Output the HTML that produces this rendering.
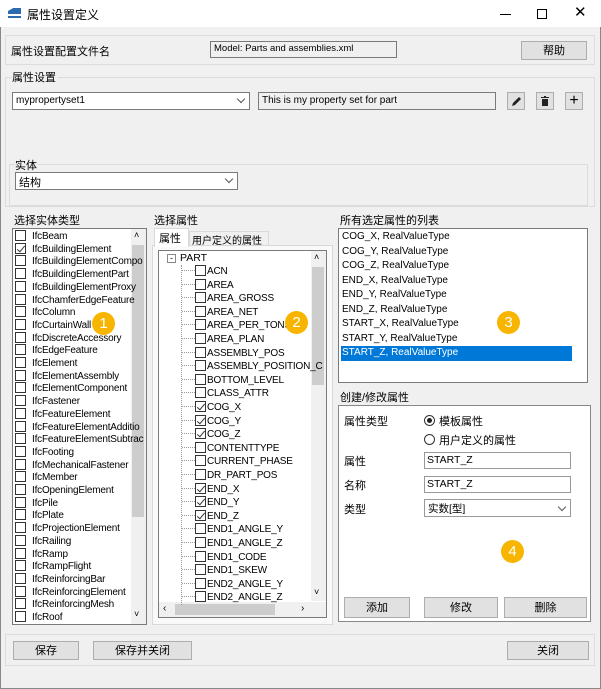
<!DOCTYPE html>
<html><head><meta charset="utf-8"><style>
*{box-sizing:border-box;margin:0;padding:0}
body{width:601px;height:689px;background:#f0f0f0;font-family:"Liberation Sans","Noto Sans CJK SC",sans-serif;font-size:11px;color:#000;position:relative;overflow:hidden}
.a{position:absolute}
.tb{left:0;top:0;width:601px;height:27px;background:#fff}
.frame{left:0;top:27px;width:601px;height:662px;border:1px solid #888;border-top:none}
.grp{position:absolute;border:1px solid #dcdcdc}
.in{position:absolute;background:#fff;border:1px solid #7a7a7a}
.ro{position:absolute;background:#f0f0f0;border:1px solid #7a7a7a}
.btn{position:absolute;background:#e1e1e1;border:1px solid #adadad;text-align:center;line-height:18px}
.lbl{position:absolute;white-space:nowrap}
.chev{position:absolute;right:5px;top:3px;width:6px;height:6px;border-right:1px solid #555;border-bottom:1px solid #555;transform:rotate(45deg)}
.row{position:absolute;left:0;white-space:nowrap;font-size:10px;letter-spacing:-0.2px;height:13px;line-height:13px}
.cb{display:inline-block;width:11px;height:11px;border:1px solid #333;background:#fff;vertical-align:-2px;margin-right:6px;position:relative}
.cb.c::after{content:"";position:absolute;left:3px;top:0px;width:3px;height:7px;border-right:1px solid #333;border-bottom:1px solid #333;transform:rotate(40deg)}
.circ{position:absolute;width:23px;height:23px;border-radius:50%;background:#f7b500;color:#fff;text-align:center;line-height:23px;font-size:15px}
.sb{position:absolute;background:#f0f0f0}
.th{position:absolute;background:#cdcdcd}
.ln{display:inline-block;width:13px;border-top:1px dotted #999;vertical-align:3px}
</style></head><body>
<div class="a tb"></div>
<div class="a" style="left:8px;top:8px;width:13px;height:11px">
<div class="a" style="left:0;top:0;width:13px;height:6px;background:#2b6cb0;clip-path:polygon(0 50%,40% 0,100% 0,100% 100%,0 100%)"></div>
<div class="a" style="left:0;top:8px;width:13px;height:2px;background:#2b6cb0"></div></div>
<div class="lbl" style="left:27px;top:6px;font-size:12px">属性设置定义</div>
<div class="a" style="left:500px;top:14px;width:11px;height:1px;background:#000"></div>
<div class="a" style="left:537px;top:9px;width:10px;height:10px;border:1px solid #000"></div>
<div class="lbl" style="left:574px;top:3px;font-size:15px">✕</div>
<div class="a frame"></div>

<div class="grp" style="left:5px;top:35px;width:590px;height:30px"></div>
<div class="lbl" style="left:11px;top:43px">属性设置配置文件名</div>
<div class="ro" style="left:210px;top:41px;width:187px;height:17px;font-size:9.5px;padding:1px 3px">Model: Parts and assemblies.xml</div>
<div class="btn" style="left:521px;top:41px;width:66px;height:19px">帮助</div>

<div class="grp" style="left:5px;top:77px;width:590px;height:130px"></div>
<div class="lbl" style="left:12px;top:69px;background:#f0f0f0;padding-right:2px">属性设置</div>
<div class="in" style="left:12px;top:92px;width:238px;height:18px;font-size:10px;padding:2px 3px">mypropertyset1<div class="chev"></div></div>
<div class="ro" style="left:258px;top:92px;width:238px;height:18px;font-size:10px;padding:2px 3px">This is my property set for part</div>
<div class="btn" style="left:507px;top:92px;width:18px;height:18px"><svg width="16" height="16" viewBox="0 0 16 16"><path d="M4 13l1-3 6-6 2 2-6 6z" fill="#222"/></svg></div>
<div class="btn" style="left:536px;top:92px;width:18px;height:18px"><svg width="16" height="16" viewBox="0 0 16 16"><path d="M4 4h8v1H4zM7 3h2v1H7zM5 6h6v7H5z" fill="#222"/></svg></div>
<div class="btn" style="left:565px;top:92px;width:18px;height:18px;font-size:16px;line-height:16px">+</div>

<div class="grp" style="left:9px;top:164px;width:579px;height:42px"></div>
<div class="lbl" style="left:15px;top:157px;background:#f0f0f0">实体</div>
<div class="in" style="left:15px;top:172px;width:223px;height:18px;padding:1px 3px">结构<div class="chev"></div></div>

<div class="lbl" style="left:14px;top:212px">选择实体类型</div>
<div class="in" style="left:12px;top:228px;width:135px;height:397px;overflow:hidden">
<div class="sb" style="left:118px;top:0;width:15px;height:395px"></div>
<div class="th" style="left:119px;top:16px;width:12px;height:272px"></div>
<div class="lbl" style="left:121px;top:1px;font-size:9px">˄</div>
<div class="lbl" style="left:121px;top:380px;font-size:9px">˅</div>
<div style="position:absolute;left:2px;top:1px">
<div class="row" style="top:0px"><span class="cb"></span>IfcBeam</div>
<div class="row" style="top:12.7px"><span class="cb c"></span>IfcBuildingElement</div>
<div class="row" style="top:25.4px"><span class="cb"></span>IfcBuildingElementCompo</div>
<div class="row" style="top:38.1px"><span class="cb"></span>IfcBuildingElementPart</div>
<div class="row" style="top:50.8px"><span class="cb"></span>IfcBuildingElementProxy</div>
<div class="row" style="top:63.5px"><span class="cb"></span>IfcChamferEdgeFeature</div>
<div class="row" style="top:76.2px"><span class="cb"></span>IfcColumn</div>
<div class="row" style="top:88.9px"><span class="cb"></span>IfcCurtainWall</div>
<div class="row" style="top:101.6px"><span class="cb"></span>IfcDiscreteAccessory</div>
<div class="row" style="top:114.3px"><span class="cb"></span>IfcEdgeFeature</div>
<div class="row" style="top:127px"><span class="cb"></span>IfcElement</div>
<div class="row" style="top:139.7px"><span class="cb"></span>IfcElementAssembly</div>
<div class="row" style="top:152.4px"><span class="cb"></span>IfcElementComponent</div>
<div class="row" style="top:165.1px"><span class="cb"></span>IfcFastener</div>
<div class="row" style="top:177.8px"><span class="cb"></span>IfcFeatureElement</div>
<div class="row" style="top:190.5px"><span class="cb"></span>IfcFeatureElementAdditio</div>
<div class="row" style="top:203.2px"><span class="cb"></span>IfcFeatureElementSubtrac</div>
<div class="row" style="top:215.9px"><span class="cb"></span>IfcFooting</div>
<div class="row" style="top:228.6px"><span class="cb"></span>IfcMechanicalFastener</div>
<div class="row" style="top:241.3px"><span class="cb"></span>IfcMember</div>
<div class="row" style="top:254px"><span class="cb"></span>IfcOpeningElement</div>
<div class="row" style="top:266.7px"><span class="cb"></span>IfcPile</div>
<div class="row" style="top:279.4px"><span class="cb"></span>IfcPlate</div>
<div class="row" style="top:292.1px"><span class="cb"></span>IfcProjectionElement</div>
<div class="row" style="top:304.8px"><span class="cb"></span>IfcRailing</div>
<div class="row" style="top:317.5px"><span class="cb"></span>IfcRamp</div>
<div class="row" style="top:330.2px"><span class="cb"></span>IfcRampFlight</div>
<div class="row" style="top:342.9px"><span class="cb"></span>IfcReinforcingBar</div>
<div class="row" style="top:355.6px"><span class="cb"></span>IfcReinforcingElement</div>
<div class="row" style="top:368.3px"><span class="cb"></span>IfcReinforcingMesh</div>
<div class="row" style="top:381px"><span class="cb"></span>IfcRoof</div>
</div></div>

<div class="lbl" style="left:154px;top:212px">选择属性</div>
<div class="a" style="left:152px;top:245px;width:181px;height:380px;border:1px solid #d9d9d9;background:#f9f9f9"></div>
<div class="a" style="left:154px;top:228px;width:35px;height:19px;background:#fff;border:1px solid #d9d9d9;border-bottom:none;padding:1px 4px">属性</div>
<div class="a" style="left:189px;top:231px;width:80px;height:15px;background:#f0f0f0;border:1px solid #d9d9d9;padding:0 2px;font-size:10px;white-space:nowrap">用户定义的属性</div>
<div class="in" style="left:158px;top:250px;width:169px;height:368px;overflow:hidden">
<div class="sb" style="left:152px;top:0;width:15px;height:350px"></div>
<div class="th" style="left:153px;top:16px;width:12px;height:118px"></div>
<div class="lbl" style="left:155px;top:1px;font-size:9px">˄</div>
<div class="lbl" style="left:155px;top:336px;font-size:9px">˅</div>
<div class="sb" style="left:0;top:351px;width:167px;height:15px"></div>
<div class="th" style="left:16px;top:353px;width:100px;height:11px"></div>
<div class="lbl" style="left:4px;top:352px;font-size:10px">‹</div>
<div class="lbl" style="left:142px;top:352px;font-size:10px">›</div>
<div class="a" style="left:8px;top:3px;width:9px;height:9px;border:1px solid #888;font-size:9px;line-height:6px;text-align:center">-</div>
<div class="a" style="left:21px;top:1px;font-size:10.5px">PART</div>
<div class="a" style="left:22px;top:14px;width:0;height:340px;border-left:1px dotted #999"></div>
<div style="position:absolute;left:23px;top:14px;width:150px">
<div class="row" style="top:0"><span class="ln"></span><span class="cb" style="margin-right:1px"></span>ACN</div>
<div class="row" style="top:13.6px"><span class="ln"></span><span class="cb" style="margin-right:1px"></span>AREA</div>
<div class="row" style="top:27.2px"><span class="ln"></span><span class="cb" style="margin-right:1px"></span>AREA_GROSS</div>
<div class="row" style="top:40.8px"><span class="ln"></span><span class="cb" style="margin-right:1px"></span>AREA_NET</div>
<div class="row" style="top:54.4px"><span class="ln"></span><span class="cb" style="margin-right:1px"></span>AREA_PER_TONS</div>
<div class="row" style="top:68px"><span class="ln"></span><span class="cb" style="margin-right:1px"></span>AREA_PLAN</div>
<div class="row" style="top:81.6px"><span class="ln"></span><span class="cb" style="margin-right:1px"></span>ASSEMBLY_POS</div>
<div class="row" style="top:95.2px"><span class="ln"></span><span class="cb" style="margin-right:1px"></span>ASSEMBLY_POSITION_C</div>
<div class="row" style="top:108.8px"><span class="ln"></span><span class="cb" style="margin-right:1px"></span>BOTTOM_LEVEL</div>
<div class="row" style="top:122.4px"><span class="ln"></span><span class="cb" style="margin-right:1px"></span>CLASS_ATTR</div>
<div class="row" style="top:136px"><span class="ln"></span><span class="cb c" style="margin-right:1px"></span>COG_X</div>
<div class="row" style="top:149.6px"><span class="ln"></span><span class="cb c" style="margin-right:1px"></span>COG_Y</div>
<div class="row" style="top:163.2px"><span class="ln"></span><span class="cb c" style="margin-right:1px"></span>COG_Z</div>
<div class="row" style="top:176.8px"><span class="ln"></span><span class="cb" style="margin-right:1px"></span>CONTENTTYPE</div>
<div class="row" style="top:190.4px"><span class="ln"></span><span class="cb" style="margin-right:1px"></span>CURRENT_PHASE</div>
<div class="row" style="top:204px"><span class="ln"></span><span class="cb" style="margin-right:1px"></span>DR_PART_POS</div>
<div class="row" style="top:217.6px"><span class="ln"></span><span class="cb c" style="margin-right:1px"></span>END_X</div>
<div class="row" style="top:231.2px"><span class="ln"></span><span class="cb c" style="margin-right:1px"></span>END_Y</div>
<div class="row" style="top:244.8px"><span class="ln"></span><span class="cb c" style="margin-right:1px"></span>END_Z</div>
<div class="row" style="top:258.4px"><span class="ln"></span><span class="cb" style="margin-right:1px"></span>END1_ANGLE_Y</div>
<div class="row" style="top:272px"><span class="ln"></span><span class="cb" style="margin-right:1px"></span>END1_ANGLE_Z</div>
<div class="row" style="top:285.6px"><span class="ln"></span><span class="cb" style="margin-right:1px"></span>END1_CODE</div>
<div class="row" style="top:299.2px"><span class="ln"></span><span class="cb" style="margin-right:1px"></span>END1_SKEW</div>
<div class="row" style="top:312.8px"><span class="ln"></span><span class="cb" style="margin-right:1px"></span>END2_ANGLE_Y</div>
<div class="row" style="top:326.4px"><span class="ln"></span><span class="cb" style="margin-right:1px"></span>END2_ANGLE_Z</div>
</div></div>

<div class="lbl" style="left:340px;top:212px">所有选定属性的列表</div>
<div class="in" style="left:338px;top:228px;width:250px;height:155px">
<div style="position:absolute;left:3px;top:1px;font-size:10px;line-height:14.5px">
<div>COG_X, RealValueType</div><div>COG_Y, RealValueType</div><div>COG_Z, RealValueType</div><div>END_X, RealValueType</div><div>END_Y, RealValueType</div><div>END_Z, RealValueType</div><div>START_X, RealValueType</div><div>START_Y, RealValueType</div>
<div style="background:#0078d7;color:#fff;width:231px;margin-left:-1px;padding-left:1px">START_Z, RealValueType</div></div></div>

<div class="lbl" style="left:340px;top:389px">创建/修改属性</div>
<div class="in" style="left:338px;top:405px;width:253px;height:217px;border-color:#888"></div>
<div class="lbl" style="left:344px;top:413px">属性类型</div>
<div class="a" style="left:424px;top:415px;width:11px;height:11px;border:1px solid #333;border-radius:50%;background:#fff"><div class="a" style="left:2px;top:2px;width:5px;height:5px;border-radius:50%;background:#222"></div></div>
<div class="lbl" style="left:439px;top:413px">模板属性</div>
<div class="a" style="left:424px;top:434px;width:11px;height:11px;border:1px solid #333;border-radius:50%;background:#fff"></div>
<div class="lbl" style="left:439px;top:432px">用户定义的属性</div>
<div class="lbl" style="left:344px;top:453px">属性</div>
<div class="in" style="left:424px;top:452px;width:147px;height:17px;font-size:10.5px;padding:1px 2px;border-color:#999">START_Z</div>
<div class="lbl" style="left:344px;top:477px">名称</div>
<div class="in" style="left:424px;top:476px;width:147px;height:17px;font-size:10.5px;padding:1px 2px;border-color:#999">START_Z</div>
<div class="lbl" style="left:344px;top:501px">类型</div>
<div class="in" style="left:424px;top:499px;width:147px;height:18px;font-size:10.5px;padding:1px 3px;border-color:#999">实数[型]<div class="chev" style="top:4px"></div></div>
<div class="btn" style="left:344px;top:597px;width:66px;height:21px;line-height:20px">添加</div>
<div class="btn" style="left:424px;top:597px;width:74px;height:21px;line-height:20px">修改</div>
<div class="btn" style="left:504px;top:597px;width:83px;height:21px;line-height:20px">删除</div>

<div class="grp" style="left:5px;top:634px;width:590px;height:32px"></div>
<div class="btn" style="left:13px;top:641px;width:66px;height:19px">保存</div>
<div class="btn" style="left:93px;top:641px;width:99px;height:19px">保存并关闭</div>
<div class="btn" style="left:507px;top:641px;width:82px;height:19px">关闭</div>

<div class="circ" style="left:92px;top:312px">1</div>
<div class="circ" style="left:285px;top:311px">2</div>
<div class="circ" style="left:497px;top:311px">3</div>
<div class="circ" style="left:501px;top:540px">4</div>
</body></html>
